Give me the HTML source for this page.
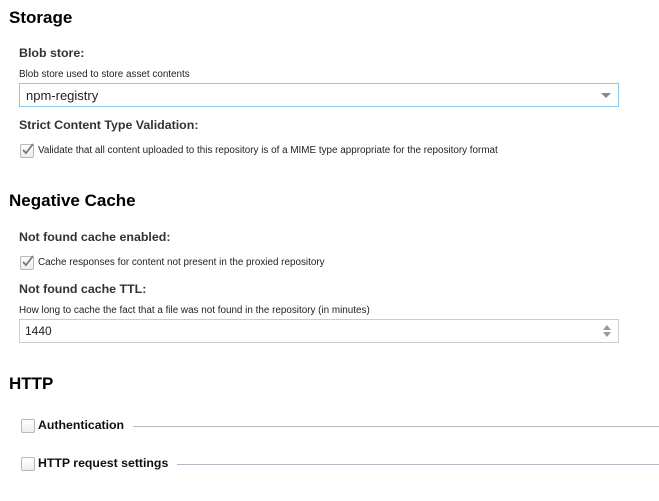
<!DOCTYPE html>
<html><head><meta charset="utf-8"><style>
body{margin:0;width:659px;height:501px;background:#fff;font-family:"Liberation Sans",sans-serif;color:#222;position:relative;overflow:hidden}
.a{position:absolute;white-space:nowrap}
.h{font-size:17px;font-weight:bold;color:#000;left:9px}
.l{font-size:12.4px;font-weight:bold;color:#333;left:19px}
.s{font-size:9.9px;color:#222;left:19px}
.box{position:absolute;left:19px;width:598px;height:22px;border:1px solid #ccc;box-sizing:content-box}
.cb{position:absolute;left:20px;width:12px;height:12px;border:1px solid #b8b8b8;border-radius:2px;background:linear-gradient(#fff,#eee)}
.line{position:absolute;height:1px;background:#b4b8c4;right:0}
</style></head><body>
<div class="a h" style="top:8px">Storage</div>
<div class="a l" style="top:46px">Blob store:</div>
<div class="a s" style="top:69px">Blob store used to store asset contents</div>
<div class="box" style="top:83px;border-color:#8ccbe8"></div>
<div class="a" style="left:26px;top:88px;font-size:13px;color:#222">npm-registry</div>
<div class="a" style="left:601px;top:93px;width:0;height:0;border-left:5px solid transparent;border-right:5px solid transparent;border-top:5px solid #888"></div>
<div class="a l" style="top:118px">Strict Content Type Validation:</div>
<div class="cb" style="top:144px"></div>
<svg class="a" style="left:20px;top:141px" width="16" height="16"><path d="M3 9 L6 12 L13 3" stroke="#777" stroke-width="1.8" fill="none"/></svg>
<div class="a s" style="left:38px;top:145px">Validate that all content uploaded to this repository is of a MIME type appropriate for the repository format</div>
<div class="a h" style="top:191px">Negative Cache</div>
<div class="a l" style="top:230px">Not found cache enabled:</div>
<div class="cb" style="top:256px"></div>
<svg class="a" style="left:20px;top:253px" width="16" height="16"><path d="M3 9 L6 12 L13 3" stroke="#777" stroke-width="1.8" fill="none"/></svg>
<div class="a s" style="left:38px;top:257px">Cache responses for content not present in the proxied repository</div>
<div class="a l" style="top:282px">Not found cache TTL:</div>
<div class="a s" style="top:305px">How long to cache the fact that a file was not found in the repository (in minutes)</div>
<div class="box" style="top:319px"></div>
<div class="a" style="left:25px;top:324px;font-size:12px;color:#222">1440</div>
<div class="a" style="left:603px;top:325px;width:0;height:0;border-left:4px solid transparent;border-right:4px solid transparent;border-bottom:5px solid #999"></div>
<div class="a" style="left:603px;top:332px;width:0;height:0;border-left:4px solid transparent;border-right:4px solid transparent;border-top:5px solid #999"></div>
<div class="a h" style="top:374px">HTTP</div>
<div class="cb" style="top:419px;left:21px"></div>
<div class="a" style="left:38px;top:418px;font-size:12.3px;font-weight:bold;color:#111">Authentication</div>
<div class="line" style="left:133px;top:426px"></div>
<div class="cb" style="top:457px;left:21px"></div>
<div class="a" style="left:38px;top:456px;font-size:12.3px;font-weight:bold;color:#111">HTTP request settings</div>
<div class="line" style="left:177px;top:464px"></div>
</body></html>
